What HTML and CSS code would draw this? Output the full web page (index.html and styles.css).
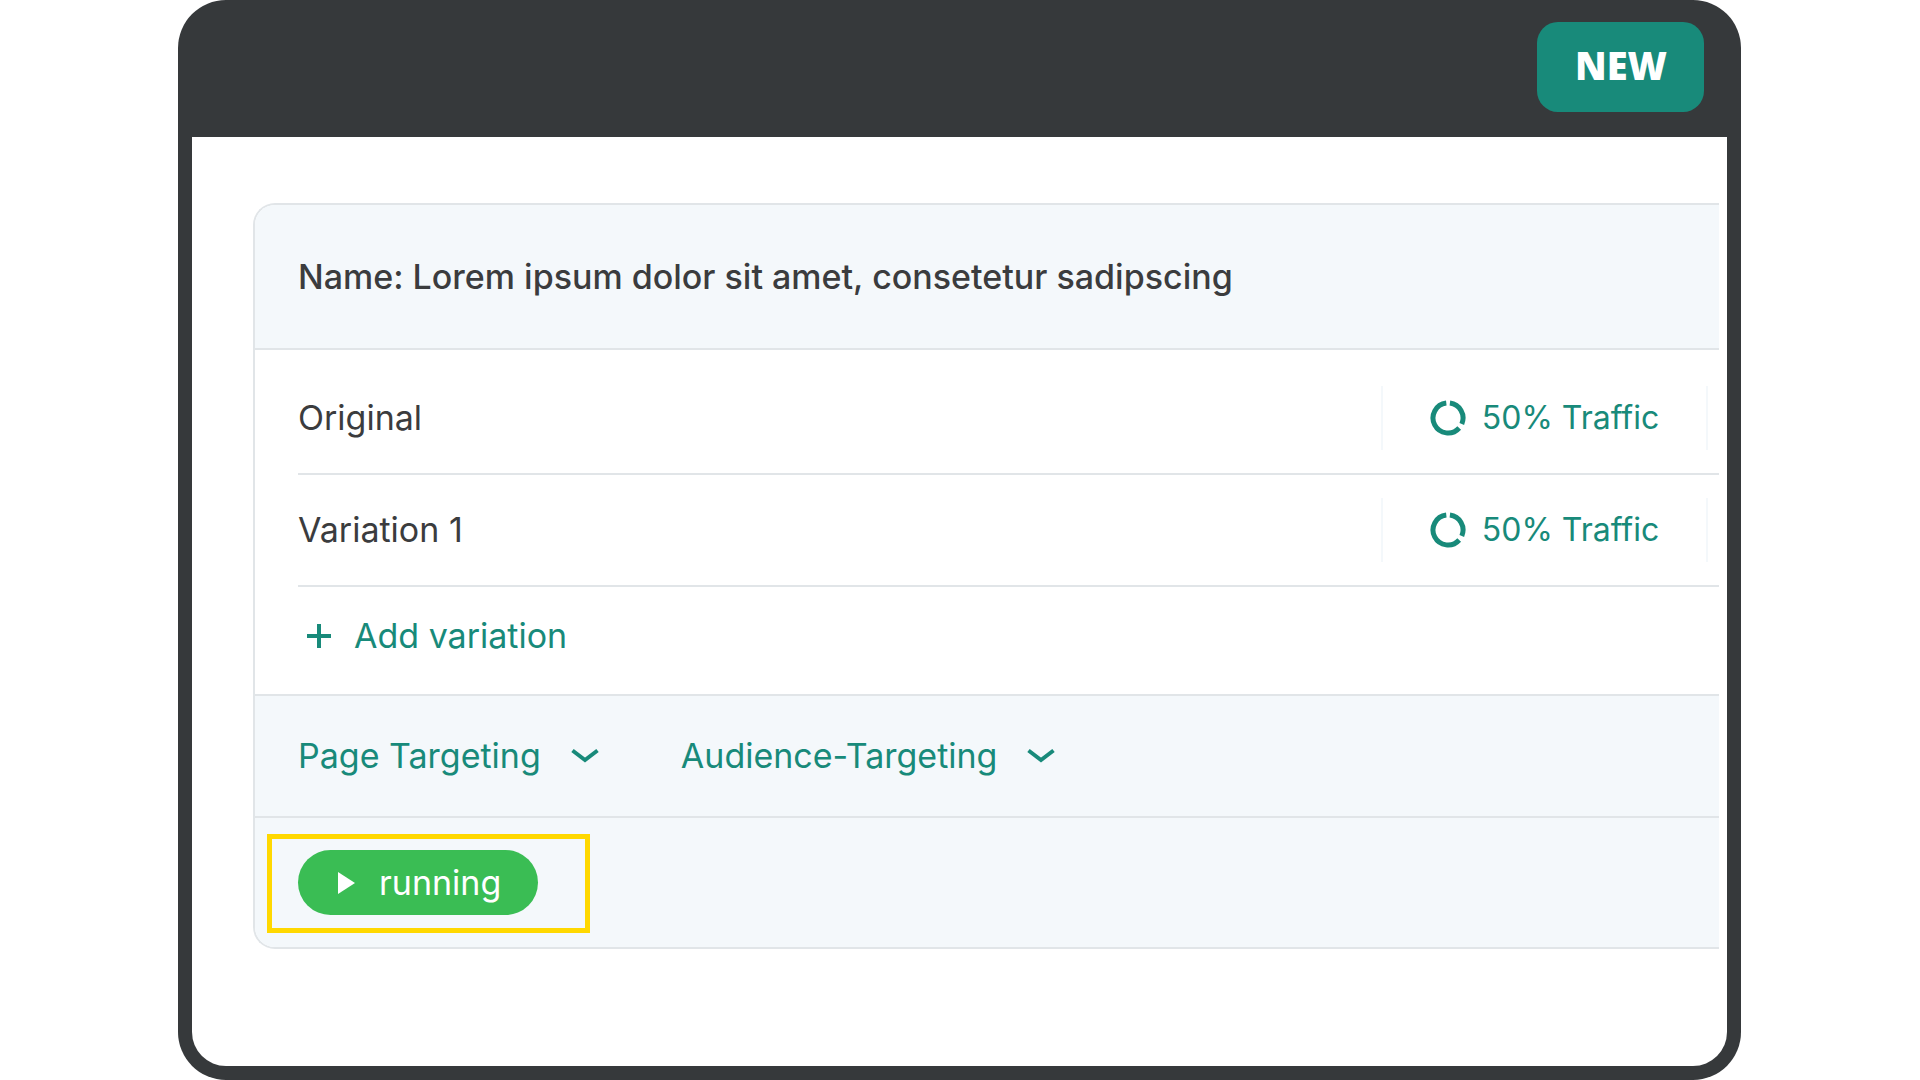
FILE: index.html
```html
<!DOCTYPE html>
<html lang="en">
<head>
  <title>Experiment</title>
  <meta charset="UTF-8">
  <link rel="stylesheet" href="styles.css">
</head>
<body>

<div class="window">
  <header class="window-bar">
    <span class="badge">NEW</span>
  </header>

  <main class="window-content">
    <section class="card">
      <h1 class="card-title">Name: Lorem ipsum dolor sit amet, consetetur sadipscing</h1>

      <ul class="variations">
        <li class="variation">
          <span>Original</span>
          <button class="traffic">
            <svg width="36" height="36" viewBox="0 0 36 36" fill="none" stroke="currentColor" stroke-width="5">
              <path d="M19.9 3.1 A15 15 0 0 1 31.8 23.9"/>
              <path d="M29.2 28 A15 15 0 1 1 16.3 3.1"/>
            </svg>
            50% Traffic
          </button>
        </li>
        <li class="variation">
          <span>Variation 1</span>
          <button class="traffic">
            <svg width="36" height="36" viewBox="0 0 36 36" fill="none" stroke="currentColor" stroke-width="5">
              <path d="M19.9 3.1 A15 15 0 0 1 31.8 23.9"/>
              <path d="M29.2 28 A15 15 0 1 1 16.3 3.1"/>
            </svg>
            50% Traffic
          </button>
        </li>
      </ul>

      <div class="add-row">
        <button class="add">
          <svg width="24" height="24" viewBox="0 0 24 24" fill="none" stroke="currentColor" stroke-width="4">
            <path d="M12 0 V24 M0 12 H24"/>
          </svg>
          Add variation
        </button>
      </div>

      <div class="targeting">
        <button class="dropdown">
          Page Targeting
          <svg width="28" height="16" viewBox="0 0 28 16" fill="none" stroke="currentColor" stroke-width="4">
            <path d="M1.5 2.5 L14 12 L26.5 2.5"/>
          </svg>
        </button>
        <button class="dropdown">
          Audience-Targeting
          <svg width="28" height="16" viewBox="0 0 28 16" fill="none" stroke="currentColor" stroke-width="4">
            <path d="M1.5 2.5 L14 12 L26.5 2.5"/>
          </svg>
        </button>
      </div>

      <div class="status">
        <div class="highlight">
          <button class="running">
            <svg width="18" height="22" viewBox="0 0 18 22" fill="currentColor">
              <path d="M1 0 L18 11 L1 22 Z"/>
            </svg>
            running
          </button>
        </div>
      </div>
    </section>
  </main>
</div>

</body>
</html>
```
FILE: styles.css
```css
* {
    box-sizing: border-box;
}
body {
    margin: 0;
    padding: 0 179px 0 178px;
    background-color: white;
    color: #3b3c3e;
    font-family: Inter, sans-serif;
    font-size: 34px;
    line-height: 48px;
}
button {
    display: flex;
    align-items: center;
    padding: 0;
    border: 0;
    background: none;
    color: #188a7a;
    font: inherit;
    white-space: nowrap;
    cursor: pointer;
}

/* window */
.window {
    display: flex;
    flex-direction: column;
    min-height: 100vh;
    padding: 0 14px 14px;
    background-color: #36393b;
    border-radius: 48px;
}
.window-bar {
    display: flex;
    justify-content: flex-end;
    padding: 22px 23px 25px;
}
.badge {
    padding: 18px 37px 22px 38px;
    border-radius: 21px;
    background-color: #188a7a;
    color: white;
    font-family: "Open Sans", sans-serif;
    font-size: 38px;
    font-weight: 800;
    line-height: 50px;
}
.window-content {
    flex: 1;
    padding: 66px 8px 66px 61px;
    background-color: white;
    border-radius: 0 0 34px 34px;
}

/* card */
.card {
    overflow: hidden;
    border: 2px solid #e1e5e8;
    border-right: 0;
    border-radius: 22px 0 0 22px;
}
.card-title {
    margin: 0;
    padding: 48px 43px 47px;
    border-bottom: 2px solid #e1e5e8;
    background-color: #f4f8fb;
    font-size: 34px;
    font-weight: 500;
}
.variations {
    margin: 0;
    padding: 13px 0 0 43px;
    list-style: none;
}
.variation {
    display: flex;
    justify-content: space-between;
    align-items: center;
    height: 112px;
    padding-right: 11px;
    border-bottom: 2px solid #e1e5e8;
}
.traffic {
    justify-content: center;
    gap: 16px;
    width: 327px;
    height: 64px;
    border: solid #f4f8fb;
    border-width: 0 2px;
    font-size: 32px;
}
.add-row {
    padding: 25px 52px 34px;
}
.add {
    gap: 23px;
}
.targeting {
    display: flex;
    gap: 82px;
    padding: 36px 43px;
    border: solid #e1e5e8;
    border-width: 2px 0;
    background-color: #f4f8fb;
}
.dropdown {
    gap: 30px;
}

/* status */
.status {
    display: flex;
    padding: 16px 12px 14px;
    background-color: #f4f8fb;
}
.highlight {
    padding: 11px 47px 13px 26px;
    border: 5px solid #ffd800;
}
.running {
    gap: 24px;
    height: 65px;
    padding: 0 37px 0 39px;
    border-radius: 33px;
    background-color: #3abd54;
    color: white;
}
```
